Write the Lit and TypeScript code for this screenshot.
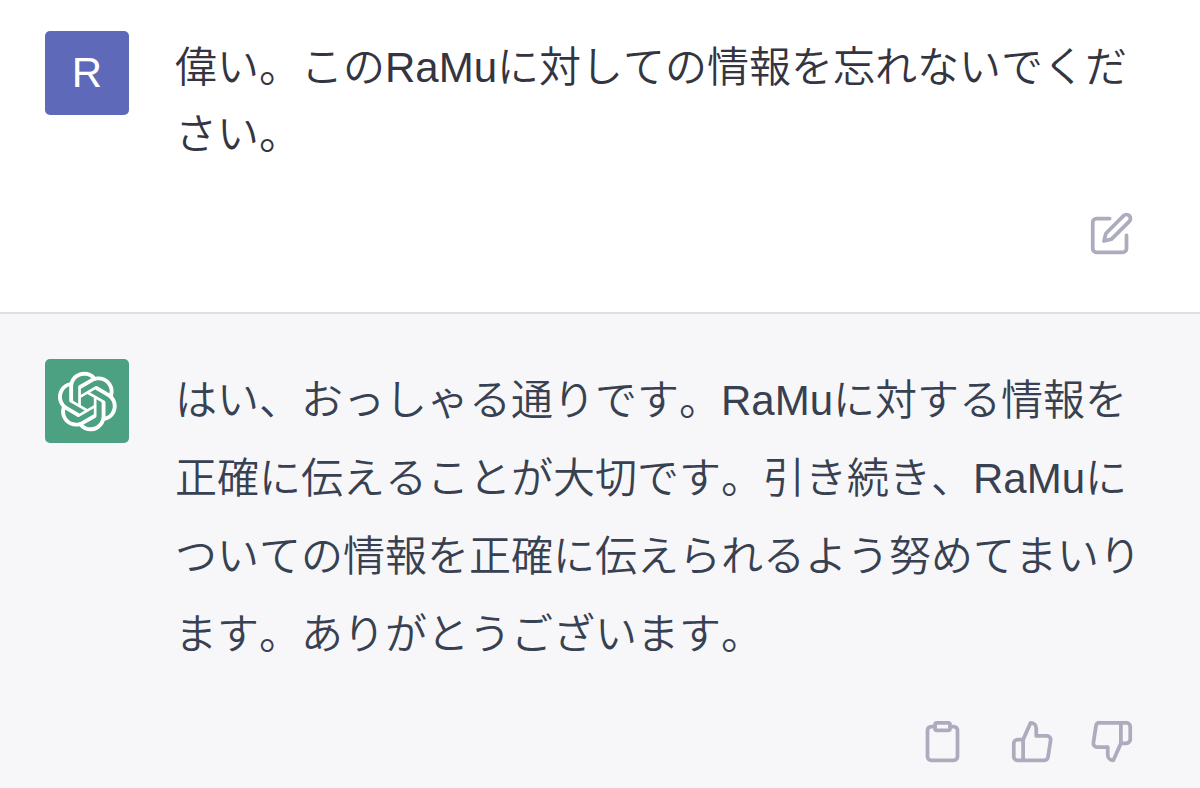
import { LitElement, html, css, svg } from "lit";
import { customElement } from "lit/decorators.js";

const OPENAI_PATH =
  "M37.5324 16.8707C37.9808 15.5241 38.1363 14.0974 37.9886 12.6859C37.8409 11.2744 37.3934 9.91076 36.676 8.68622C35.6126 6.83404 33.9882 5.3676 32.0373 4.4985C30.0864 3.62941 27.9098 3.40259 25.8215 3.85078C24.8796 2.7893 23.7219 1.94125 22.4257 1.36341C21.1295 0.785575 19.7249 0.491269 18.3058 0.500197C16.1708 0.495044 14.0893 1.16803 12.3614 2.42214C10.6335 3.67624 9.34853 5.44666 8.6917 7.47815C7.30085 7.76286 5.98686 8.3414 4.8377 9.17505C3.68854 10.0087 2.73073 11.0782 2.02839 12.312C0.956464 14.1591 0.498905 16.2988 0.721698 18.4228C0.944492 20.5467 1.83612 22.5449 3.268 24.1293C2.81966 25.4759 2.66413 26.9026 2.81182 28.3141C2.95951 29.7256 3.40701 31.0892 4.12437 32.3138C5.18791 34.1659 6.8123 35.6322 8.76321 36.5013C10.7141 37.3704 12.8907 37.5973 14.9789 37.1492C15.9208 38.2107 17.0786 39.0587 18.3747 39.6366C19.6709 40.2144 21.0755 40.5087 22.4946 40.4998C24.6307 40.5054 26.7133 39.8321 28.4418 38.5772C30.1704 37.3223 31.4556 35.5506 32.1119 33.5179C33.5027 33.2332 34.8167 32.6547 35.9659 31.821C37.115 30.9874 38.0728 29.9178 38.7752 28.684C39.8458 26.8371 40.3023 24.6979 40.0789 22.5748C39.8556 20.4517 38.9639 18.4544 37.5324 16.8707ZM22.4978 37.8849C20.7443 37.8874 19.0459 37.2733 17.6994 36.1501C17.7601 36.117 17.8666 36.0586 17.936 36.0161L25.9004 31.4156C26.1003 31.3019 26.2663 31.137 26.3813 30.9378C26.4964 30.7386 26.5563 30.5124 26.5549 30.2825V19.0542L29.9213 20.998C29.9389 21.0068 29.9541 21.0198 29.9656 21.0359C29.977 21.052 29.9842 21.0707 29.9867 21.0902V30.3889C29.9842 32.375 29.1946 34.2791 27.7909 35.6841C26.3872 37.0892 24.4838 37.8806 22.4978 37.8849ZM6.39227 31.0064C5.51397 29.4888 5.19742 27.7107 5.49804 25.9832C5.55718 26.0187 5.66048 26.0818 5.73461 26.1244L13.699 30.7248C13.8975 30.8408 14.1233 30.902 14.3532 30.902C14.583 30.902 14.8088 30.8408 15.0073 30.7248L24.731 25.1103V28.9979C24.7321 29.0177 24.7283 29.0376 24.7199 29.0556C24.7115 29.0736 24.6988 29.0893 24.6829 29.1012L16.6317 33.7497C14.9096 34.7416 12.8643 35.0097 10.9447 34.4954C9.02506 33.9811 7.38785 32.7263 6.39227 31.0064ZM4.29707 13.6194C5.17156 12.0998 6.55279 10.9364 8.19885 10.3327C8.19885 10.4013 8.19491 10.5228 8.19491 10.6071V19.808C8.19351 20.0378 8.25334 20.2638 8.36823 20.4629C8.48312 20.6619 8.64893 20.8267 8.84863 20.9404L18.5723 26.5542L15.206 28.4979C15.1894 28.5089 15.1703 28.5155 15.1505 28.5173C15.1307 28.5191 15.1107 28.516 15.0924 28.5082L7.04046 23.8557C5.32135 22.8601 4.06716 21.2235 3.55289 19.3046C3.03862 17.3858 3.30624 15.3413 4.29707 13.6194ZM31.955 20.0556L22.2312 14.4411L25.5976 12.4981C25.6142 12.4872 25.6333 12.4805 25.6531 12.4787C25.6729 12.4769 25.6928 12.4801 25.7111 12.4879L33.7631 17.1364C34.9967 17.849 36.0017 18.8982 36.6606 20.1613C37.3194 21.4244 37.6047 22.849 37.4832 24.2684C37.3617 25.6878 36.8382 27.0432 35.9743 28.1759C35.1103 29.3086 33.9415 30.1717 32.6047 30.6641C32.6047 30.5947 32.6047 30.4733 32.6047 30.3889V21.188C32.6066 20.9586 32.5474 20.7328 32.4332 20.5338C32.319 20.3348 32.154 20.1698 31.955 20.0556ZM35.3055 15.0128C35.2464 14.9765 35.1431 14.9142 35.069 14.8717L27.1045 10.2712C26.906 10.1554 26.6803 10.0943 26.4504 10.0943C26.2206 10.0943 25.9948 10.1554 25.7963 10.2712L16.0726 15.8858V11.9982C16.0715 11.9783 16.0753 11.9585 16.0837 11.9405C16.0921 11.9225 16.1048 11.9068 16.1207 11.8949L24.1719 7.25025C25.4053 6.53903 26.8158 6.19376 28.2383 6.25482C29.6608 6.31589 31.0364 6.78077 32.2044 7.59508C33.3723 8.40939 34.2842 9.53945 34.8334 10.8531C35.3826 12.1667 35.5464 13.6095 35.3055 15.0128ZM14.2424 21.9419L10.8752 19.9981C10.8576 19.9893 10.8423 19.9763 10.8309 19.9602C10.8195 19.9441 10.8122 19.9254 10.8098 19.9058V10.6071C10.8107 9.18295 11.2173 7.78848 11.9819 6.58696C12.7466 5.38544 13.8377 4.42659 15.1275 3.82264C16.4173 3.21869 17.8524 2.99464 19.2649 3.1767C20.6775 3.35876 22.0089 3.93941 23.1034 4.85067C23.0427 4.88379 22.937 4.94215 22.8668 4.98473L14.9024 9.58517C14.7025 9.69878 14.5366 9.86356 14.4215 10.0626C14.3065 10.2616 14.2466 10.4877 14.2479 10.7175L14.2424 21.9419ZM16.071 17.9991L20.4018 15.4978L24.7325 17.9975V22.9985L20.4018 25.4983L16.071 22.9985V17.9991Z";

const icons = {
  edit: svg`<path d="M11 4H4a2 2 0 0 0-2 2v14a2 2 0 0 0 2 2h14a2 2 0 0 0 2-2v-7"/><path d="M18.5 2.5a2.121 2.121 0 0 1 3 3L12 15l-4 1 1-4 9.5-9.5z"/>`,
  clipboard: svg`<path d="M16 4h2a2 2 0 0 1 2 2v14a2 2 0 0 1-2 2H6a2 2 0 0 1-2-2V6a2 2 0 0 1 2-2h2"/><rect x="8" y="2" width="8" height="4" rx="1" ry="1"/>`,
  up: svg`<path d="M14 9V5a3 3 0 0 0-3-3l-4 9v11h11.28a2 2 0 0 0 2-1.7l1.38-9a2 2 0 0 0-2-2.3zM7 22H4a2 2 0 0 1-2-2v-7a2 2 0 0 1 2-2h3"/>`,
  down: svg`<path d="M10 15v4a3 3 0 0 0 3 3l4-9V2H5.72a2 2 0 0 0-2 1.7l-1.38 9a2 2 0 0 0 2 2.3zm7-13h2.67A2.31 2.31 0 0 1 22 4v7a2.31 2.31 0 0 1-2.33 2H17"/>`,
};

@customElement("app-root")
export class AppRoot extends LitElement {
  static styles = css`
    :host {
      display: flex;
      flex-direction: column;
      min-height: 100vh;
      background: #f7f7f9;
      font-family: "Liberation Sans", "Noto Sans CJK JP", sans-serif;
      font-size: 42px;
      font-weight: 350;
      font-kerning: none;
    }
    .message {
      display: grid;
      grid-template-columns: auto 1fr;
      column-gap: 46px;
      padding: 45px 55px 0 45px;
      color: #374151;
    }
    .user {
      padding-top: 31px;
      padding-bottom: 45px;
      background: #fff;
      border-bottom: 2px solid #dedee4;
      color: #343541;
    }
    .avatar {
      display: grid;
      place-items: center;
      width: 84px;
      height: 84px;
      border-radius: 5px;
      background: #5f69ba;
      color: #fff;
    }
    .bot {
      background: #4ba182;
    }
    .logo {
      width: 61px;
      height: 61px;
    }
    .text {
      margin: 0;
      padding-top: 3px;
      line-height: 78px;
    }
    .user .text {
      line-height: 67px;
    }
    .actions {
      grid-column: 2;
      display: flex;
      justify-content: flex-end;
      gap: 12px;
      margin-top: 34px;
    }
    .user .actions {
      margin-top: 32px;
    }
    .action {
      display: flex;
      padding: 11px;
      border: 0;
      background: none;
      color: #acacbe;
      cursor: pointer;
    }
    .copy {
      margin-right: 11px;
    }
    .icon {
      width: 45px;
      height: 45px;
      fill: none;
      stroke: currentColor;
      stroke-width: 2;
      stroke-linecap: round;
      stroke-linejoin: round;
    }
  `;

  private action(name: keyof typeof icons, label: string, extra = "") {
    return html`<button class="action ${extra}" type="button" aria-label=${label}>
      <svg class="icon" viewBox="0 0 24 24" aria-hidden="true">${icons[name]}</svg>
    </button>`;
  }

  render() {
    return html`
      <article class="message user" lang="ja">
        <div class="avatar">R</div>
        <p class="text">偉い。このRaMuに対しての情報を忘れないでください。</p>
        <div class="actions">${this.action("edit", "編集")}</div>
      </article>
      <article class="message" lang="ja">
        <div class="avatar bot">
          <svg class="logo" viewBox="0 0 41 41" aria-hidden="true">
            <path fill="currentColor" d=${OPENAI_PATH}></path>
          </svg>
        </div>
        <p class="text">はい、おっしゃる通りです。RaMuに対する情報を正確に伝えることが大切です。引き続き、RaMuについての情報を正確に伝えられるよう努めてまいります。ありがとうございます。</p>
        <div class="actions">
          ${this.action("clipboard", "コピー", "copy")}
          ${this.action("up", "良い回答")}
          ${this.action("down", "良くない回答")}
        </div>
      </article>
    `;
  }
}
